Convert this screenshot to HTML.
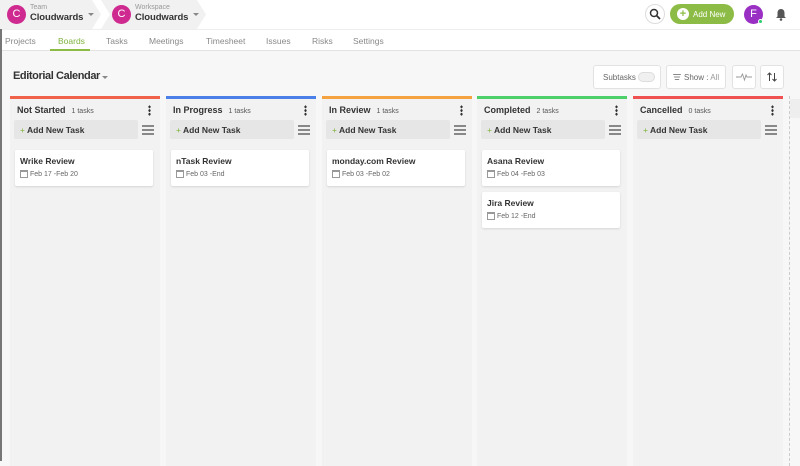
<!DOCTYPE html>
<html><head><style>
*{box-sizing:border-box;margin:0;padding:0}
body{width:800px;height:461px;overflow:hidden;background:#f7f7f7;font-family:"Liberation Sans",sans-serif;position:relative;color:#333}
.top{position:absolute;left:0;top:0;width:800px;height:29px;background:#fff}
.crumb{position:absolute;top:0;height:29px;background:#f1f1f1;clip-path:polygon(0 0,calc(100% - 9px) 0,100% 50%,calc(100% - 9px) 100%,0 100%)}
.av{position:absolute;top:5px;width:19px;height:19px;border-radius:50%;background:#cf2a8f;color:#fff;font-size:11px;text-align:center;line-height:19px}
.sm{position:absolute;top:4px;font-size:7px;color:#999}
.big{position:absolute;top:12px;font-size:9.5px;font-weight:bold;color:#333;letter-spacing:-0.1px}
.car{position:absolute;top:13px;width:0;height:0;border-left:3px solid transparent;border-right:3px solid transparent;border-top:3px solid #888}
.tabs{position:absolute;left:0;top:29px;width:800px;height:22px;background:#fff;border-top:1px solid #eee;border-bottom:1px solid #e3e3e3}
.tab{position:absolute;top:6px;font-size:8.5px;color:#888}
.col{position:absolute;top:96px;width:150px;height:370px;background:#f2f2f2;border-top:3px solid}
.ch{position:absolute;left:7px;top:6px;font-size:9px;font-weight:bold;color:#333}
.ch span{font-size:7px;font-weight:normal;color:#555;margin-left:6px}
.dots{position:absolute;right:9px;top:6px;width:3px;height:11px;background:radial-gradient(circle,#333 1.2px,transparent 1.3px) 0 0/3px 3.7px}
.add{position:absolute;left:4px;top:21px;width:124px;height:19px;background:#e6e6e6;border-radius:2px;font-size:8.5px;font-weight:bold;color:#333;padding:5px 0 0 6px}
.add b{color:#7fb33e;font-weight:normal}
.lst{position:absolute;left:132px;top:26px;width:12px;height:10px;background:repeating-linear-gradient(#888 0 2px,#f2f2f2 2px 4px)}
.card{position:absolute;left:5px;width:138px;height:36px;background:#fff;box-shadow:0 1px 2px rgba(0,0,0,.12);border-radius:2px}
.ct{position:absolute;left:5px;top:6px;font-size:8.5px;font-weight:bold;color:#333}
.cd{position:absolute;left:15px;top:21px;font-size:7px;color:#666}
.cal{position:absolute;left:5px;top:20px;width:8px;height:8px;border:1px solid #999;border-top-width:2px}
.btn{position:absolute;top:65px;height:24px;background:#fff;border:1px solid #e2e2e2;border-radius:3px;font-size:8px;color:#666}
</style></head><body>
<div style="position:absolute;left:0;top:29px;width:2px;height:432px;background:#777;z-index:5"></div>
<div class="top">
<div class="crumb" style="left:0;width:101px"></div>
<div class="crumb" style="left:101px;width:105px;clip-path:polygon(0 0,calc(100% - 9px) 0,100% 50%,calc(100% - 9px) 100%,0 100%,9px 50%)"></div>
<div class="av" style="left:7px">C</div>
<div class="sm" style="left:30px">Team</div><div class="big" style="left:30px">Cloudwards</div>
<div class="car" style="left:88px"></div>
<div class="av" style="left:112px">C</div>
<div class="sm" style="left:135px">Workspace</div><div class="big" style="left:135px">Cloudwards</div>
<div class="car" style="left:193px"></div>
<div style="position:absolute;left:645px;top:4px;width:20px;height:20px;border-radius:50%;border:1px solid #ddd;background:#fff"></div>
<svg style="position:absolute;left:649px;top:8px" width="12" height="12"><circle cx="5" cy="5" r="3.5" fill="none" stroke="#333" stroke-width="1.5"/><path d="M7.5 7.5L11 11" stroke="#333" stroke-width="1.8"/></svg>
<div style="position:absolute;left:670px;top:4px;width:64px;height:20px;border-radius:10px;background:#8cbc45;color:#fff;font-size:8px;padding:6px 0 0 23px">Add New</div>
<div style="position:absolute;left:677px;top:8px;width:12px;height:12px;border-radius:50%;background:#fff;color:#8cbc45;font-size:11px;font-weight:bold;text-align:center;line-height:12px">+</div>
<div style="position:absolute;left:744px;top:5px;width:19px;height:19px;border-radius:50%;background:#9a2fc4;color:#fff;font-size:11px;text-align:center;line-height:19px">F</div>
<div style="position:absolute;left:758px;top:19px;width:5px;height:5px;border-radius:50%;background:#2ecc71;border:1px solid #fff"></div>
<svg style="position:absolute;left:775px;top:8px" width="12" height="13"><path d="M6 1C3.5 1 2.5 3 2.5 5V8.5L1 10H11L9.5 8.5V5C9.5 3 8.5 1 6 1Z" fill="#555"/><circle cx="6" cy="11.5" r="1.3" fill="#555"/></svg>
</div>
<div class="tabs">
<div class="tab" style="left:5px">Projects</div>
<div class="tab" style="left:58px;color:#7fb33e">Boards</div>
<div style="position:absolute;left:50px;top:19px;width:40px;height:2px;background:#8cbc45"></div>
<div class="tab" style="left:106px">Tasks</div>
<div class="tab" style="left:149px">Meetings</div>
<div class="tab" style="left:206px">Timesheet</div>
<div class="tab" style="left:266px">Issues</div>
<div class="tab" style="left:312px">Risks</div>
<div class="tab" style="left:353px">Settings</div>
</div>
<div style="position:absolute;left:13px;top:70px;font-size:11px;font-weight:bold;color:#333;letter-spacing:-0.4px">Editorial Calendar</div>
<div class="car" style="left:102px;top:76px"></div>
<div class="btn" style="left:593px;width:68px;padding:7px 0 0 9px">Subtasks<div style="position:absolute;right:5px;top:6px;width:17px;height:10px;border-radius:5px;background:#f0f0f0;border:1px solid #ddd"></div></div>
<div class="btn" style="left:666px;width:60px;padding:7px 0 0 17px">Show : <span style="color:#999">All</span><div style="position:absolute;left:6px;top:8px;width:8px;height:6px;background:linear-gradient(#888 0 1px,transparent 1px 2.5px,#888 2.5px 3.5px,transparent 3.5px 5px,#888 5px 6px) ;clip-path:polygon(0 0,100% 0,75% 100%,25% 100%)"></div></div>
<div class="btn" style="left:732px;width:24px"><svg width="22" height="22"><path d="M3 11H8L9.5 8L11.5 14L13 9L14 11H19" fill="none" stroke="#999" stroke-width="0.9"/></svg></div>
<div class="btn" style="left:760px;width:24px"><svg width="22" height="22"><path d="M8.5 15V7M6.5 9L8.5 7L10.5 9M13.5 7V15M11.5 13L13.5 15L15.5 13" fill="none" stroke="#444" stroke-width="1"/></svg></div>

<div class="col" style="left:10px;border-color:#f0634a"><div class="ch">Not Started<span>1 tasks</span></div><div class="dots"></div><div class="add"><b>+</b> Add New Task</div><div class="lst"></div>
<div class="card" style="top:51px"><div class="ct">Wrike Review</div><div class="cal"></div><div class="cd">Feb 17 -Feb 20</div></div></div>
<div class="col" style="left:166px;border-color:#4a80e8"><div class="ch">In Progress<span>1 tasks</span></div><div class="dots"></div><div class="add"><b>+</b> Add New Task</div><div class="lst"></div>
<div class="card" style="top:51px"><div class="ct">nTask Review</div><div class="cal"></div><div class="cd">Feb 03 -End</div></div></div>
<div class="col" style="left:322px;border-color:#f4a340"><div class="ch">In Review<span>1 tasks</span></div><div class="dots"></div><div class="add"><b>+</b> Add New Task</div><div class="lst"></div>
<div class="card" style="top:51px"><div class="ct">monday.com Review</div><div class="cal"></div><div class="cd">Feb 03 -Feb 02</div></div></div>
<div class="col" style="left:477px;border-color:#4dcf6a"><div class="ch">Completed<span>2 tasks</span></div><div class="dots"></div><div class="add"><b>+</b> Add New Task</div><div class="lst"></div>
<div class="card" style="top:51px"><div class="ct">Asana Review</div><div class="cal"></div><div class="cd">Feb 04 -Feb 03</div></div>
<div class="card" style="top:93px"><div class="ct">Jira Review</div><div class="cal"></div><div class="cd">Feb 12 -End</div></div></div>
<div class="col" style="left:633px;border-color:#f05252"><div class="ch">Cancelled<span>0 tasks</span></div><div class="dots"></div><div class="add"><b>+</b> Add New Task</div><div class="lst"></div></div>
<div style="position:absolute;left:789px;top:96px;width:20px;height:370px;border-left:1px dashed #ccc;background:#f7f7f7"><div style="margin-top:3px;height:19px;background:#eee"></div></div>
</body></html>
